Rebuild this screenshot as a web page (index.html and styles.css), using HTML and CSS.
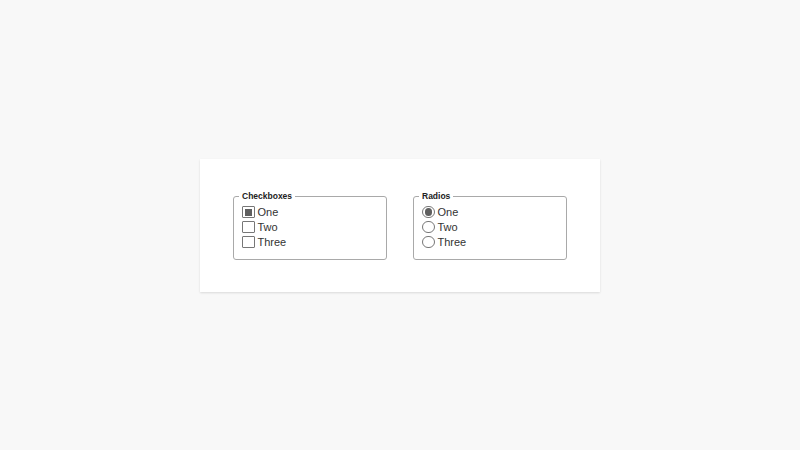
FILE: index.html
```html
<!DOCTYPE html>
<html>
<head>
<meta charset="utf-8">
<link rel="stylesheet" href="styles.css">
</head>
<body>
<div class="page">
  <div class="card">
    <fieldset class="group">
      <legend>Checkboxes</legend>
      <label class="row"><span class="box checked"></span>One</label>
      <label class="row"><span class="box"></span>Two</label>
      <label class="row"><span class="box"></span>Three</label>
    </fieldset>
    <fieldset class="group">
      <legend>Radios</legend>
      <label class="row"><span class="radio checked"></span>One</label>
      <label class="row"><span class="radio"></span>Two</label>
      <label class="row"><span class="radio"></span>Three</label>
    </fieldset>
  </div>
</div>
</body>
</html>
```
FILE: styles.css
```css
html, body {
  margin: 0;
  padding: 0;
  background: #f8f8f8;
  font-family: "Liberation Sans", Arial, sans-serif;
}
.page {
  width: 800px;
  height: 450px;
  display: flex;
  align-items: center;
  justify-content: center;
}
.card {
  width: 400px;
  box-sizing: border-box;
  background: #fff;
  box-shadow: 0 1px 2px rgba(0,0,0,0.12);
  padding: 32px 33px 32px 33px;
  display: flex;
  gap: 26px;
}
.group {
  flex: 1;
  margin: 0;
  border: 1px solid #a9a9a9;
  border-radius: 3px;
  padding: 3px 8px 9px 8px;
  display: flex;
  flex-direction: column;
}
.group legend {
  font-size: 8.5px;
  font-weight: bold;
  color: #222;
  padding: 0 3px;
  margin-left: -3px;
  line-height: 11px;
}
.row {
  display: flex;
  align-items: center;
  height: 15px;
  font-size: 11px;
  color: #333;
  gap: 3px;
}
.box {
  width: 10.5px;
  height: 10.5px;
  border: 1px solid #777;
  border-radius: 1px;
  position: relative;
  background: #fff;
}
.box.checked::after {
  content: "";
  position: absolute;
  left: 1.75px;
  top: 1.75px;
  width: 7px;
  height: 7px;
  background: #5f5f5f;
}
.radio {
  width: 10.5px;
  height: 10.5px;
  border: 1px solid #777;
  border-radius: 50%;
  position: relative;
  background: #fff;
}
.radio.checked::after {
  content: "";
  position: absolute;
  left: 1.5px;
  top: 1.5px;
  width: 7.5px;
  height: 7.5px;
  border-radius: 50%;
  background: #5f5f5f;
}
```
